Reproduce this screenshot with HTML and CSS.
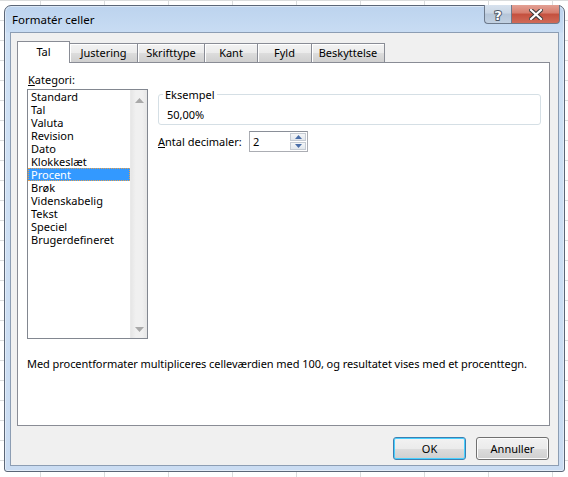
FILE: index.html
```html
<!DOCTYPE html>
<html lang="da">
<head>
<meta charset="utf-8">
<title>Formatér celler</title>
<link rel="stylesheet" href="styles.css">
</head>
<body>
<div class="window">
  <div class="titlebar">
    <span class="title">Formatér celler</span>
    <div class="caption-btns">
      <div class="cb help">
        <svg class="qsvg" width="12" height="15" viewBox="0 0 12 15"><text x="6" y="12.5" text-anchor="middle" class="qtext">?</text></svg>
      </div>
      <div class="cb close">
        <svg width="14" height="11" viewBox="0 0 14 11"><path d="M2 1 L12 10 M12 1 L2 10" stroke="#3b3b3b" stroke-width="4.2" stroke-linecap="square"/><path d="M2 1 L12 10 M12 1 L2 10" stroke="#fff" stroke-width="2.2" stroke-linecap="square"/></svg>
      </div>
    </div>
  </div>
  <div class="client">
    <div class="tabs">
      <div class="tab active w-tal">Tal</div>
      <div class="tab w-just">Justering</div>
      <div class="tab w-skrift">Skrifttype</div>
      <div class="tab w-kant">Kant</div>
      <div class="tab w-fyld">Fyld</div>
      <div class="tab w-besk">Beskyttelse</div>
    </div>
    <div class="panel">
      <div class="cols">
        <div class="left">
          <div class="label"><u>K</u>ategori:</div>
          <div class="listbox">
            <ul class="items">
              <li>Standard</li>
              <li>Tal</li>
              <li>Valuta</li>
              <li>Revision</li>
              <li>Dato</li>
              <li>Klokkeslæt</li>
              <li class="sel">Procent</li>
              <li>Brøk</li>
              <li>Videnskabelig</li>
              <li>Tekst</li>
              <li>Speciel</li>
              <li>Brugerdefineret</li>
            </ul>
            <div class="scrollbar">
              <svg width="9" height="5" viewBox="0 0 9 5"><path d="M0 5 L4.5 0 L9 5 Z" fill="#a9a9a9"/></svg>
              <svg width="9" height="5" viewBox="0 0 9 5"><path d="M0 0 L4.5 5 L9 0 Z" fill="#a9a9a9"/></svg>
            </div>
          </div>
        </div>
        <div class="right">
          <div class="group">
            <span class="legend">Eksempel</span>
            <div class="sample">50,00%</div>
          </div>
          <div class="decrow">
            <span class="declabel"><u>A</u>ntal decimaler:</span>
            <div class="spin">
              <span class="spinval">2</span>
              <div class="spinbtns">
                <div class="sbtn"><svg width="7" height="4" viewBox="0 0 7 4"><path d="M0 4 L3.5 0 L7 4 Z" fill="#4a6ea8"/></svg></div>
                <div class="sbtn"><svg width="7" height="4" viewBox="0 0 7 4"><path d="M0 0 L3.5 4 L7 0 Z" fill="#4a6ea8"/></svg></div>
              </div>
            </div>
          </div>
        </div>
      </div>
      <p class="desc">Med procentformater multipliceres celleværdien med 100, og resultatet vises med et procenttegn.</p>
    </div>
    <div class="buttons">
      <button class="btn default">OK</button>
      <button class="btn">Annuller</button>
    </div>
  </div>
</div>
</body>
</html>
```

FILE: styles.css
```css
* { box-sizing: border-box; }

html, body {
  margin: 0;
  padding: 0;
}

body {
  width: 568px;
  height: 477px;
  overflow: hidden;
  font-family: "Noto Sans", "DejaVu Sans", sans-serif;
  font-size: 11px;
  color: #000;
  background-color: #fff;
  background-image:
    linear-gradient(to right, #dadcdd 1px, transparent 1px),
    linear-gradient(to bottom, #dadcdd 1px, transparent 1px);
  background-size: 64px 20px;
  background-position: 40px 0;
  padding: 5px 3px 0 4px;
}

.window {
  width: 561px;
  height: 467px;
  border: 1px solid #5b6677;
  border-radius: 7px 7px 3px 3px;
  background: linear-gradient(to bottom, #bcd3ee 0, #c8dcf3 26px, #cfe1f5 27px, #cadcf2 100%);
  box-shadow: inset 0 0 0 1px rgba(255,255,255,0.45);
  display: flex;
  flex-direction: column;
  padding: 0 5px 5px 5px;
}

.titlebar {
  height: 26px;
  display: flex;
  align-items: flex-start;
  justify-content: space-between;
}

.title {
  padding: 6px 0 0 2px;
  line-height: 15px;
  font-size: 11.5px;
  color: #000;
}

.caption-btns {
  display: flex;
  margin-top: -1px;
  margin-right: -1px;
}

.cb {
  height: 19px;
  display: flex;
  align-items: center;
  justify-content: center;
  border: 1px solid #6d7a8c;
  border-top: none;
}

.help {
  width: 27px;
  border-radius: 0 0 0 4px;
  border-right: none;
  background: linear-gradient(to bottom, #d7e2ee 0, #c9d6e5 45%, #b5c5d8 50%, #c2d1e2 100%);
}

.qtext {
  font-family: "DejaVu Sans", sans-serif;
  font-weight: bold;
  font-size: 13px;
  fill: #ffffff;
  stroke: #4f5968;
  stroke-width: 2px;
  paint-order: stroke fill;
  stroke-linejoin: round;
}

.close {
  width: 49px;
  border-radius: 0 0 4px 0;
  background: linear-gradient(to bottom, #e3a195 0, #d67c6c 45%, #c4503e 50%, #d06a58 100%);
}

.client {
  flex: 1;
  border: 1px solid #8c9db3;
  background: #f0f0f0;
  padding: 8px 8px 0 6px;
  display: flex;
  flex-direction: column;
}

.tabs {
  display: flex;
  align-items: flex-end;
  height: 21px;
  position: relative;
  z-index: 1;
}

.tab {
  height: 19px;
  border: 1px solid #898c95;
  border-bottom: none;
  border-left: none;
  background: linear-gradient(to bottom, #f3f3f3 0, #ebebeb 50%, #dddddd 51%, #cfcfcf 100%);
  box-shadow: inset 1px 1px 0 #fff;
  text-align: center;
  line-height: 17px;
}

.tab.active {
  height: 22px;
  margin-bottom: -1px;
  background: #fff;
  box-shadow: none;
  border-left: 1px solid #898c95;
  border-right: 1px solid #898c95;
  line-height: 20px;
}

.w-tal { width: 53px; }
.w-just { width: 68px; }
.w-skrift { width: 67px; }
.w-kant { width: 53px; }
.w-fyld { width: 54px; }
.w-besk { width: 73px; }

.panel {
  width: 533px;
  height: 364px;
  background: #fff;
  border: 1px solid #898c95;
  padding: 0 9px 0 9px;
  display: flex;
  flex-direction: column;
}

.cols {
  display: flex;
  gap: 10px;
}

.left {
  width: 121px;
  display: flex;
  flex-direction: column;
}

.label {
  margin-top: 9px;
  height: 15px;
  line-height: 15px;
  padding-left: 1px;
}

.listbox {
  margin-top: 2px;
  width: 121px;
  height: 250px;
  border: 1px solid #828790;
  display: flex;
  padding: 0;
}

.items {
  list-style: none;
  margin: 0;
  padding: 0;
  flex: 1;
}

.items li {
  height: 13px;
  line-height: 13px;
  padding-left: 3px;
}

.items li.sel {
  background: #3399ff;
  color: #fff;
  outline: 1px dotted #e8a04a;
  outline-offset: -1px;
}

.scrollbar {
  width: 17px;
  background: linear-gradient(to right, #e6e6e6, #f0f0f0 30%, #f0f0f0 70%, #e6e6e6);
  border-left: 1px solid #e9e9e9;
  display: flex;
  flex-direction: column;
  align-items: center;
  justify-content: space-between;
  padding: 8px 0 6px 0;
}

.right {
  flex: 1;
  padding-top: 31px;
}

.group {
  position: relative;
  height: 31px;
  border: 1px solid #d5dfe5;
  border-radius: 3px;
  width: 383px;
}

.legend {
  position: absolute;
  top: -8px;
  left: 4px;
  padding: 0 2px;
  background: #fff;
  line-height: 15px;
}

.sample {
  padding: 12px 0 0 8px;
  line-height: 15px;
}

.decrow {
  display: flex;
  align-items: center;
  margin-top: 6px;
  height: 21px;
}

.declabel {
  width: 91px;
  line-height: 15px;
}

.spin {
  width: 59px;
  height: 21px;
  border: 1px solid #abadb3;
  border-top-color: #8a8f98;
  display: flex;
  align-items: center;
  justify-content: space-between;
  padding: 1px 1px 1px 3px;
}

.spinval {
  line-height: 15px;
}

.spinbtns {
  width: 16px;
  height: 17px;
  display: flex;
  flex-direction: column;
  gap: 1px;
}

.sbtn {
  flex: 1;
  border: 1px solid #c5cbd3;
  background: linear-gradient(to bottom, #f4f6f8, #e2e7ed);
  display: flex;
  align-items: center;
  justify-content: center;
}

.desc {
  margin: 17px 0 0 0;
  line-height: 15px;
  letter-spacing: -0.06px;
}

.buttons {
  display: flex;
  justify-content: flex-end;
  gap: 10px;
  margin-top: 11px;
  padding-right: 1px;
}

.btn {
  font-family: "Noto Sans", "DejaVu Sans", sans-serif;
  font-size: 11px;
  color: #000;
  width: 73px;
  height: 23px;
  border: 1px solid #707070;
  border-radius: 3px;
  background: linear-gradient(to bottom, #f2f2f2 0, #ebebeb 50%, #dddddd 51%, #cfcfcf 100%);
  box-shadow: inset 0 0 0 1px #fcfcfc;
  padding: 0;
  line-height: 19px;
}

.btn.default {
  border-color: #3c7fb1;
  box-shadow: inset 0 0 0 1px #48d0ff;
}
```
